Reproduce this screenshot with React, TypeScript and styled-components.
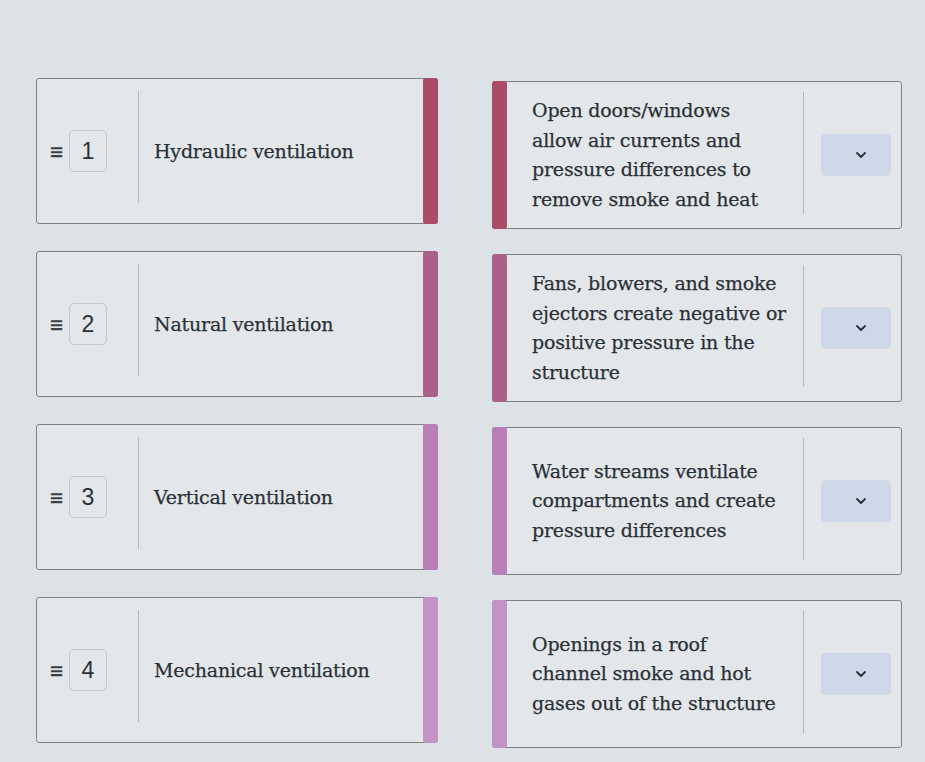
import React from "react";
import styled, { createGlobalStyle } from "styled-components";

const GlobalStyle = createGlobalStyle`
  html, body {
    margin: 0;
    padding: 0;
    background: #dce2e5;
  }
  body {
    font-family: "DejaVu Serif", "Liberation Serif", serif;
    color: #2a3037;
  }
`;

interface Pair {
  term: string;
  definition: string[];
  accent: string;
}

const pairs: Pair[] = [
  {
    term: "Hydraulic ventilation",
    definition: ["Open doors/windows", "allow air currents and", "pressure differences to", "remove smoke and heat"],
    accent: "#a94c68",
  },
  {
    term: "Natural ventilation",
    definition: ["Fans, blowers, and smoke", "ejectors create negative or", "positive pressure in the", "structure"],
    accent: "#ab6089",
  },
  {
    term: "Vertical ventilation",
    definition: ["Water streams ventilate", "compartments and create", "pressure differences"],
    accent: "#b97db8",
  },
  {
    term: "Mechanical ventilation",
    definition: ["Openings in a roof", "channel smoke and hot", "gases out of the structure"],
    accent: "#c393c6",
  },
];

const Page = styled.div`
  padding: 78px 25px 20px 36px;
  display: flex;
  flex-direction: column;
  gap: 22px;
`;

const Row = styled.div`
  display: grid;
  grid-template-columns: 402px 410px;
  column-gap: 54px;
  align-items: start;
`;

const Card = styled.div`
  height: 146px;
  box-sizing: border-box;
  border: 1px solid #7c8187;
  border-radius: 3px;
  background: #e3e7e9;
  display: flex;
  align-items: center;
`;

const TermCard = styled(Card)`
  padding-left: 12px;
`;

const DefinitionCard = styled(Card)`
  margin-top: 3px;
  height: 148px;
`;

const Bar = styled.div<{ $color: string; $side: "left" | "right" }>`
  align-self: stretch;
  width: 15px;
  flex: none;
  margin: -1px 0;
  ${(p) => (p.$side === "right" ? "margin-right: -1px;" : "margin-left: -1px;")}
  border-radius: 3px;
  background: ${(p) => p.$color};
`;

const Handle = styled.span`
  font-family: "DejaVu Sans", sans-serif;
  font-size: 18px;
  font-weight: bold;
  color: #3b4047;
  width: 14px;
`;

const NumberBox = styled.div`
  width: 38px;
  height: 42px;
  margin-left: 6px;
  box-sizing: border-box;
  border: 1px solid #c4c9cd;
  border-radius: 5px;
  display: flex;
  align-items: center;
  justify-content: center;
  font-family: "Liberation Sans", Arial, sans-serif;
  font-size: 23px;
  line-height: 1;
  color: #2a3037;
`;

const Divider = styled.div`
  align-self: stretch;
  width: 1px;
  margin: 12px 0 20px;
  background: #b4b9be;
  flex: none;
`;

const TermDivider = styled(Divider)`
  margin-left: 31px;
`;

const Term = styled.div`
  flex: 1;
  padding-left: 15px;
  font-size: 19px;
  letter-spacing: -0.2px;
  -webkit-text-stroke: 0.25px #2a3037;
`;

const Definition = styled.div`
  width: 262px;
  padding-left: 25px;
  font-size: 19px;
  line-height: 29.5px;
  letter-spacing: -0.2px;
  white-space: nowrap;
  -webkit-text-stroke: 0.25px #2a3037;
`;

const DefinitionDivider = styled(Divider)`
  margin: 10px 0 14px 9px;
`;

const DropButton = styled.div`
  width: 70px;
  height: 42px;
  margin-left: 17px;
  border-radius: 4px;
  background: #cfd8e8;
  display: flex;
  align-items: center;
  justify-content: center;
  padding-left: 10px;
  box-sizing: border-box;
`;

const Chevron = () => (
  <svg width="12" height="8" viewBox="0 0 12 8" fill="none">
    <path d="M2 2l4 4 4-4" stroke="#2b3038" strokeWidth="1.8" strokeLinecap="round" strokeLinejoin="round" />
  </svg>
);

const App = () => (
  <>
    <GlobalStyle />
    <Page>
      {pairs.map((p, i) => (
        <Row key={p.term}>
          <TermCard>
            <Handle>≡</Handle>
            <NumberBox>{i + 1}</NumberBox>
            <TermDivider />
            <Term>{p.term}</Term>
            <Bar $color={p.accent} $side="right" />
          </TermCard>
          <DefinitionCard>
            <Bar $color={p.accent} $side="left" />
            <Definition>
              {p.definition.map((line) => (
                <div key={line}>{line}</div>
              ))}
            </Definition>
            <DefinitionDivider />
            <DropButton>
              <Chevron />
            </DropButton>
          </DefinitionCard>
        </Row>
      ))}
    </Page>
  </>
);

export default App;
